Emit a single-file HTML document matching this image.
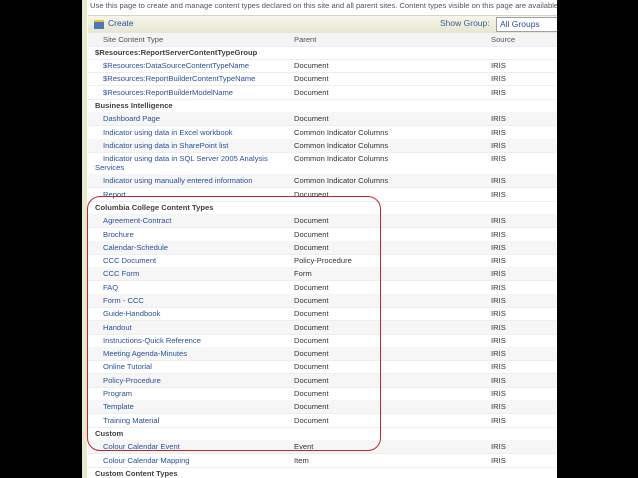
<!DOCTYPE html>
<html><head><meta charset="utf-8"><style>
body{margin:0;width:638px;height:478px;background:#000;position:relative;overflow:hidden;font-family:Tahoma,"Liberation Sans","DejaVu Sans",sans-serif;font-size:7.6px;color:#333}
#pg{position:absolute;left:82px;top:0;width:475px;height:478px;background:#fff;overflow:hidden}
#strip{position:absolute;left:0;top:0;width:5px;height:478px;background:#e6e8cc}
.r{position:absolute;left:6px;width:470px;height:13px;line-height:13px;border-bottom:1px solid #eeeeee;white-space:nowrap}
.a{background:#f6f6f6}
.n{position:absolute;left:15px;color:#2b4f9e}
.g{position:absolute;left:7px;font-weight:bold;color:#404040}
.p{position:absolute;left:206px}
.s{position:absolute;left:403px}
</style></head><body>
<div id="pg">
<div id="strip"></div>
<div style="position:absolute;left:8px;top:0;line-height:11px;color:#555;white-space:nowrap">Use this page to create and manage content types declared on this site and all parent sites. Content types visible on this page are available for use</div>
<div style="position:absolute;left:6px;top:15px;width:470px;height:17px;background:linear-gradient(#f6f6ea,#e6e6d2);border-top:1px solid #d6d6c0;border-bottom:1px solid #c8c8b0">
<div style="position:absolute;left:6px;top:4px;width:10px;height:7px;background:#4f78b8;border-top:2px solid #e8c040"></div>
<span style="position:absolute;left:20px;top:2px;font-size:8.5px;color:#2b4f9e">Create</span>
<span style="position:absolute;left:352px;top:2px;font-size:8.5px;color:#3d5a99">Show Group:</span>
<div style="position:absolute;left:408px;top:1px;width:70px;height:13px;background:#fff;border:1px solid #a0a0a0;font-size:8.5px;line-height:13px;padding-left:3px;color:#2b4f9e">All Groups</div>
</div>
<div class="r" style="top:33px;background:#f4f4f4"><span class="n" style="color:#555">Site Content Type</span><span class="p" style="color:#555">Parent</span><span class="s" style="color:#555">Source</span></div>
<div class="r" style="top:46px"><span class="g">$Resources:ReportServerContentTypeGroup</span></div>
<div class="r" style="top:59px"><span class="n">$Resources:DataSourceContentTypeName</span><span class="p">Document</span><span class="s">IRIS</span></div>
<div class="r" style="top:72px"><span class="n">$Resources:ReportBuilderContentTypeName</span><span class="p">Document</span><span class="s">IRIS</span></div>
<div class="r" style="top:86px"><span class="n">$Resources:ReportBuilderModelName</span><span class="p">Document</span><span class="s">IRIS</span></div>
<div class="r" style="top:99px"><span class="g">Business Intelligence</span></div>
<div class="r a" style="top:112px"><span class="n">Dashboard Page</span><span class="p">Document</span><span class="s">IRIS</span></div>
<div class="r" style="top:126px"><span class="n">Indicator using data in Excel workbook</span><span class="p">Common Indicator Columns</span><span class="s">IRIS</span></div>
<div class="r a" style="top:139px"><span class="n">Indicator using data in SharePoint list</span><span class="p">Common Indicator Columns</span><span class="s">IRIS</span></div>
<div class="r" style="top:152px;height:21px;line-height:9px;padding-top:2px"><span class="n">Indicator using data in SQL Server 2005 Analysis<br><span style="margin-left:-8px">Services</span></span><span class="p">Common Indicator Columns</span><span class="s">IRIS</span></div>
<div class="r a" style="top:174px"><span class="n">Indicator using manually entered information</span><span class="p">Common Indicator Columns</span><span class="s">IRIS</span></div>
<div class="r" style="top:188px"><span class="n">Report</span><span class="p">Document</span><span class="s">IRIS</span></div>
<div class="r" style="top:201px"><span class="g">Columbia College Content Types</span></div>
<div class="r a" style="top:214px"><span class="n">Agreement-Contract</span><span class="p">Document</span><span class="s">IRIS</span></div>
<div class="r" style="top:228px"><span class="n">Brochure</span><span class="p">Document</span><span class="s">IRIS</span></div>
<div class="r a" style="top:241px"><span class="n">Calendar-Schedule</span><span class="p">Document</span><span class="s">IRIS</span></div>
<div class="r" style="top:254px"><span class="n">CCC Document</span><span class="p">Policy-Procedure</span><span class="s">IRIS</span></div>
<div class="r a" style="top:267px"><span class="n">CCC Form</span><span class="p">Form</span><span class="s">IRIS</span></div>
<div class="r" style="top:281px"><span class="n">FAQ</span><span class="p">Document</span><span class="s">IRIS</span></div>
<div class="r a" style="top:294px"><span class="n">Form - CCC</span><span class="p">Document</span><span class="s">IRIS</span></div>
<div class="r" style="top:307px"><span class="n">Guide-Handbook</span><span class="p">Document</span><span class="s">IRIS</span></div>
<div class="r a" style="top:321px"><span class="n">Handout</span><span class="p">Document</span><span class="s">IRIS</span></div>
<div class="r" style="top:334px"><span class="n">Instructions-Quick Reference</span><span class="p">Document</span><span class="s">IRIS</span></div>
<div class="r a" style="top:347px"><span class="n">Meeting Agenda-Minutes</span><span class="p">Document</span><span class="s">IRIS</span></div>
<div class="r" style="top:360px"><span class="n">Online Tutorial</span><span class="p">Document</span><span class="s">IRIS</span></div>
<div class="r a" style="top:374px"><span class="n">Policy-Procedure</span><span class="p">Document</span><span class="s">IRIS</span></div>
<div class="r" style="top:387px"><span class="n">Program</span><span class="p">Document</span><span class="s">IRIS</span></div>
<div class="r a" style="top:400px"><span class="n">Template</span><span class="p">Document</span><span class="s">IRIS</span></div>
<div class="r" style="top:414px"><span class="n">Training Material</span><span class="p">Document</span><span class="s">IRIS</span></div>
<div class="r" style="top:427px"><span class="g">Custom</span></div>
<div class="r a" style="top:440px"><span class="n">Colour Calendar Event</span><span class="p">Event</span><span class="s">IRIS</span></div>
<div class="r" style="top:454px"><span class="n">Colour Calendar Mapping</span><span class="p">Item</span><span class="s">IRIS</span></div>
<div class="r" style="top:467px"><span class="g">Custom Content Types</span></div>
</div>
<div style="position:absolute;left:87px;top:196px;width:292px;height:253px;border:1.5px solid #c0282f;border-radius:13px"></div>
</body></html>
